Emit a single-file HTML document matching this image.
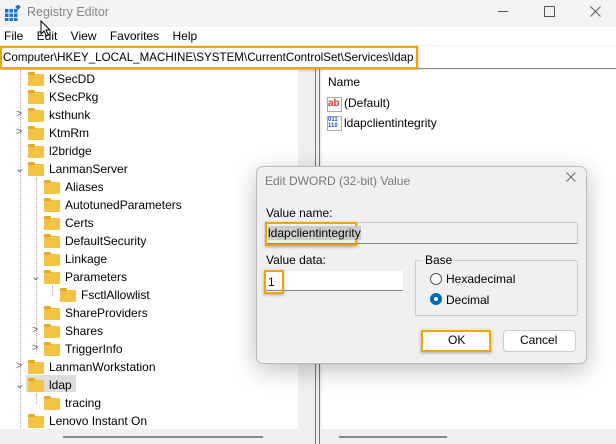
<!DOCTYPE html><html><head><style>
body{margin:0;width:616px;height:444px;overflow:hidden;background:#f0f0f0;font-family:"Liberation Sans",sans-serif;font-size:12px;color:#000;position:relative}
.a{position:absolute}
.f{position:absolute;width:16px;height:12px;background:#f3c443;border-radius:1px}
.f:before{content:"";position:absolute;left:0;top:-2px;width:7px;height:3px;background:#e4a92a;border-radius:1px 1px 0 0}
.t{position:absolute;white-space:nowrap;line-height:14px}
.ch{position:absolute;font-size:11px;color:#666}
</style></head><body>
<div class="a" style="left:0;top:0;width:616px;height:27px;background:#f3f3f3"></div>
<svg class="a" style="left:5px;top:5px" width="16" height="16"><g fill="#1a73c8"><rect x="0" y="4" width="3.5" height="3.5"/><rect x="4.5" y="4" width="3.5" height="3.5"/><rect x="9" y="4" width="3.5" height="3.5"/><rect x="0" y="8.5" width="3.5" height="3.5"/><rect x="4.5" y="8.5" width="3.5" height="3.5"/><rect x="9" y="8.5" width="3.5" height="3.5"/><rect x="0" y="13" width="3.5" height="3"/><rect x="4.5" y="13" width="3.5" height="3"/><rect x="9" y="13" width="3.5" height="3"/><rect x="11" y="0" width="4" height="4" transform="rotate(45 13 2)"/></g></svg>
<div class="t" style="left:27px;top:5px;color:#888;font-size:12.5px">Registry Editor</div>
<div class="a" style="left:498px;top:11px;width:10px;height:1px;background:#555"></div>
<div class="a" style="left:544px;top:6px;width:9px;height:9px;border:1px solid #555"></div>
<svg class="a" style="left:590px;top:6px" width="11" height="11"><path d="M0.5 0.5L10.5 10.5M10.5 0.5L0.5 10.5" stroke="#555" stroke-width="1"/></svg>
<div class="a" style="left:0;top:27px;width:616px;height:18px;background:#fff"></div>
<div class="t" style="left:4px;top:29px">File&nbsp;&nbsp;&nbsp;&nbsp;Edit&nbsp;&nbsp;&nbsp;&nbsp;View&nbsp;&nbsp;&nbsp;&nbsp;Favorites&nbsp;&nbsp;&nbsp;&nbsp;Help</div>
<svg class="a" style="left:40px;top:20px" width="12" height="18"><path d="M1 1 L1 14 L4 11 L6.5 16 L8.5 15 L6 10 L10 10 Z" fill="#fff" stroke="#000" stroke-width="1"/></svg>
<div class="a" style="left:0;top:46px;width:616px;height:22px;background:#fff;border-bottom:1px solid #888"></div>
<div class="a" style="left:0;top:46px;width:414px;height:19px;border:2px solid #f5a300;background:#fff;box-shadow:0 1px 3px rgba(0,0,0,.3)"></div>
<div class="t" style="left:3px;top:51px;font-size:11.6px">Computer\HKEY_LOCAL_MACHINE\SYSTEM\CurrentControlSet\Services\ldap</div>
<div class="a" style="left:0;top:70px;width:298px;height:359px;background:#fff"></div>
<div class="a" style="left:322px;top:70px;width:294px;height:359px;background:#fff"></div>
<div class="a" style="left:315px;top:69px;width:1px;height:375px;background:#777"></div>
<div class="a" style="left:319px;top:69px;width:1px;height:375px;background:#777"></div>
<div class="a" style="left:63px;top:436px;width:200px;height:2px;background:#888"></div>
<div class="a" style="left:339px;top:436px;width:108px;height:2px;background:#888"></div>
<div class="a" style="left:20px;top:70px;height:358px;border-left:1px dotted #aaa"></div>
<div class="a" style="left:36px;top:178px;height:176px;border-left:1px dotted #aaa"></div>
<div class="a" style="left:36px;top:394px;height:10px;border-left:1px dotted #aaa"></div>
<div class="a" style="left:52px;top:286px;height:10px;border-left:1px dotted #aaa"></div>
<div class="a" style="left:26px;top:375px;width:50px;height:17px;background:#ddd"></div>
<div class="f" style="left:28px;top:74px"></div><div class="t" style="left:49px;top:72px">KSecDD</div>
<div class="f" style="left:28px;top:92px"></div><div class="t" style="left:49px;top:90px">KSecPkg</div>
<div class="ch" style="left:16px;top:108px">&gt;</div><div class="f" style="left:28px;top:110px"></div><div class="t" style="left:49px;top:108px">ksthunk</div>
<div class="ch" style="left:16px;top:126px">&gt;</div><div class="f" style="left:28px;top:128px"></div><div class="t" style="left:49px;top:126px">KtmRm</div>
<div class="f" style="left:28px;top:146px"></div><div class="t" style="left:49px;top:144px">l2bridge</div>
<div class="ch" style="left:15px;top:162px">⌄</div><div class="f" style="left:28px;top:164px"></div><div class="t" style="left:49px;top:162px">LanmanServer</div>
<div class="f" style="left:44px;top:182px"></div><div class="t" style="left:65px;top:180px">Aliases</div>
<div class="f" style="left:44px;top:200px"></div><div class="t" style="left:65px;top:198px">AutotunedParameters</div>
<div class="f" style="left:44px;top:218px"></div><div class="t" style="left:65px;top:216px">Certs</div>
<div class="f" style="left:44px;top:236px"></div><div class="t" style="left:65px;top:234px">DefaultSecurity</div>
<div class="f" style="left:44px;top:254px"></div><div class="t" style="left:65px;top:252px">Linkage</div>
<div class="ch" style="left:31px;top:270px">⌄</div><div class="f" style="left:44px;top:272px"></div><div class="t" style="left:65px;top:270px">Parameters</div>
<div class="f" style="left:60px;top:290px"></div><div class="t" style="left:81px;top:288px">FsctlAllowlist</div>
<div class="f" style="left:44px;top:308px"></div><div class="t" style="left:65px;top:306px">ShareProviders</div>
<div class="ch" style="left:32px;top:324px">&gt;</div><div class="f" style="left:44px;top:326px"></div><div class="t" style="left:65px;top:324px">Shares</div>
<div class="ch" style="left:32px;top:342px">&gt;</div><div class="f" style="left:44px;top:344px"></div><div class="t" style="left:65px;top:342px">TriggerInfo</div>
<div class="ch" style="left:16px;top:360px">&gt;</div><div class="f" style="left:28px;top:362px"></div><div class="t" style="left:49px;top:360px">LanmanWorkstation</div>
<div class="ch" style="left:15px;top:378px">⌄</div><div class="f" style="left:28px;top:380px"></div><div class="t" style="left:49px;top:378px">ldap</div>
<div class="f" style="left:44px;top:398px"></div><div class="t" style="left:65px;top:396px">tracing</div>
<div class="f" style="left:28px;top:416px"></div><div class="t" style="left:49px;top:414px">Lenovo Instant On</div>
<div class="t" style="left:328px;top:75px">Name</div>
<div class="a" style="left:327px;top:97px;width:13px;height:13px;border:1px solid #aaa;background:#fff;color:#d33;font-size:10px;font-weight:bold;line-height:12px">ab</div>
<div class="t" style="left:344px;top:96px">(Default)</div>
<div class="a" style="left:327px;top:116px;width:13px;height:13px;border:1px solid #aaa;background:#fff;color:#1a4fb0;font-size:6px;font-weight:bold;line-height:6px">011<br>110</div>
<div class="t" style="left:344px;top:116px">ldapclientintegrity</div>
<div class="a" style="left:256px;top:166px;width:329px;height:196px;background:#f0f0f0;border:1px solid #bbb;border-radius:7px;box-shadow:0 6px 24px rgba(0,0,0,.25)"></div>
<div class="t" style="left:265px;top:174px;color:#777">Edit DWORD (32-bit) Value</div>
<svg class="a" style="left:566px;top:172px" width="10" height="10"><path d="M0.5 0.5L9.5 9.5M9.5 0.5L0.5 9.5" stroke="#666" stroke-width="1"/></svg>
<div class="t" style="left:266px;top:206px">Value name:</div>
<div class="a" style="left:266px;top:222px;width:310px;height:20px;background:#f0f0f0;border:1px solid #ccc;border-bottom-color:#888"></div>
<div class="a" style="left:265px;top:222px;width:88px;height:20px;border:2px solid #f5a300;box-shadow:0 1px 3px rgba(0,0,0,.3)"></div>
<div class="t" style="left:268px;top:226px;background:#ccc">ldapclientintegrity</div>
<div class="t" style="left:266px;top:253px">Value data:</div>
<div class="a" style="left:266px;top:271px;width:137px;height:19px;background:#fff;border-bottom:1px solid #888"></div>
<div class="a" style="left:264px;top:270px;width:16px;height:20px;border:2px solid #f5a300;box-shadow:0 1px 3px rgba(0,0,0,.3)"></div>
<div class="t" style="left:268px;top:275px">1</div>
<div class="a" style="left:415px;top:260px;width:161px;height:54px;border:1px solid #ccc;border-radius:2px"></div>
<div class="t" style="left:423px;top:253px;background:#f0f0f0;padding:0 2px">Base</div>
<div class="a" style="left:430px;top:273px;width:10px;height:10px;border:1px solid #555;border-radius:50%;background:#fff"></div>
<div class="t" style="left:446px;top:272px">Hexadecimal</div>
<div class="a" style="left:430px;top:293px;width:4px;height:4px;border:4px solid #0067c0;border-radius:50%;background:#fff"></div>
<div class="t" style="left:446px;top:293px">Decimal</div>
<div class="a" style="left:421px;top:330px;width:66px;height:18px;background:#fff;border:2px solid #f5a300;box-shadow:0 1px 3px rgba(0,0,0,.3)"></div>
<div class="t" style="left:448px;top:333px">OK</div>
<div class="a" style="left:503px;top:330px;width:71px;height:20px;background:#fff;border:1px solid #ccc;border-radius:4px"></div>
<div class="t" style="left:520px;top:333px">Cancel</div>
</body></html>
